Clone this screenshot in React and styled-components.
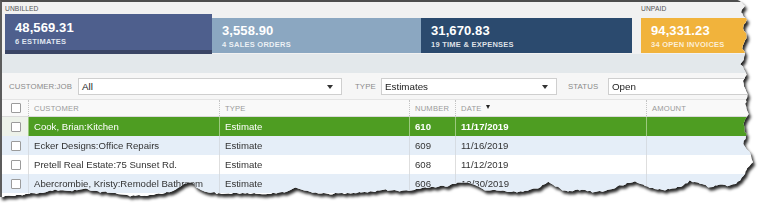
// ----- IMPORTS

import React from 'react';
import styled, { createGlobalStyle, css } from 'styled-components';

// ----- TORN EDGE

// right edge top to bottom, then bottom edge right to left
const EDGE_ANCHORS = [
	[738, 0], [745, 6], [741, 12], [747, 20], [743, 28], [747, 36], [742, 46], [745, 55],
	[741, 64], [746, 74], [743, 84], [748, 94], [745, 104], [748, 114], [743, 124], [746, 134],
	[744, 144], [750, 154], [753, 162], [746, 170], [744, 176],
	[738, 182], [730, 186], [720, 184], [710, 188], [700, 183], [690, 181], [680, 187],
	[665, 190], [650, 188], [635, 181], [625, 184], [610, 190], [595, 192], [580, 190],
	[565, 191], [548, 182], [538, 188], [520, 192], [500, 191], [485, 190], [472, 184],
	[460, 182], [448, 186], [430, 187], [414, 190], [400, 191], [385, 190], [370, 192],
	[350, 193], [330, 194], [310, 192], [296, 188], [285, 192], [265, 194], [245, 193],
	[225, 194], [205, 192], [196, 187], [190, 182], [183, 185], [170, 192], [150, 195],
	[130, 196], [115, 193], [100, 192], [85, 189], [70, 191], [55, 190], [40, 193],
	[20, 195], [0, 197],
];

const buildEdge = () => {
	let seed = 11;
	const rand = () => {
		seed = (seed * 16807) % 2147483647;
		return seed / 2147483647 - 0.5;
	};
	const pts = [[0, 0]];
	for (let i = 0; i < EDGE_ANCHORS.length - 1; i++) {
		const [ax, ay] = EDGE_ANCHORS[i];
		const [bx, by] = EDGE_ANCHORS[i + 1];
		const steps = Math.max(1, Math.ceil(Math.hypot(bx - ax, by - ay) / 3));
		for (let k = 0; k < steps; k++) {
			const t = k / steps;
			pts.push([ax + (bx - ax) * t + rand() * 1.6, ay + (by - ay) * t + rand() * 1.6]);
		}
	}
	pts.push(EDGE_ANCHORS[EDGE_ANCHORS.length - 1]);
	return `polygon(${pts.map(([x, y]) => `${x.toFixed(1)}px ${y.toFixed(1)}px`).join(', ')})`;
};

const EDGE = buildEdge();

// ----- STYLED COMPONENTS

const GlobalStyle = createGlobalStyle`
	html, body {
		margin: 0;
		padding: 0;
		background: #ffffff;
	}
	body {
		font-family: "Liberation Sans", Arial, sans-serif;
	}
`;

const Stage = styled.div`
	width: 768px;
	height: 217px;
	filter: drop-shadow(2px 3px 1.5px rgba(0, 0, 0, 0.85));
`;
const Sheet = styled.div`
	box-sizing: border-box;
	width: 768px;
	height: 217px;
	overflow: hidden;
	background: #f1f1f1;
	border-top: 2px solid #4d4d4d;
	border-left: 2px solid #5c5c5c;
	clip-path: ${EDGE};
`;

// summary bars

const Summary = styled.div`
	display: flex;
	align-items: flex-end;
	height: 52px;
	padding-left: 3px;
	background: #f1f1f1;
`;
const SummaryGroup = styled.div`
	display: flex;
	flex-direction: column;
	margin-left: ${({ $gap }) => $gap || 0}px;
`;
const Caption = styled.div`
	height: 12px;
	padding: 3px 0 0 0;
	box-sizing: border-box;
	font-size: 6.7px;
	line-height: 8px;
	color: #555555;
	letter-spacing: 0.1px;
`;
const TileRow = styled.div`
	display: flex;
	align-items: flex-end;
	height: 40px;
`;
const Tile = styled.div`
	box-sizing: border-box;
	width: ${({ $w }) => $w}px;
	height: ${({ $h }) => $h}px;
	margin-bottom: ${({ $strip }) => ($strip ? 0 : 1)}px;
	padding: ${({ $pad }) => $pad}px 0 0 10px;
	background: ${({ $bg }) => $bg};
	${({ $strip }) => $strip && css`
		border-bottom: 4px solid ${$strip};
	`}
	color: #ffffff;
	white-space: nowrap;
`;
const Amount = styled.div`
	font-size: 13px;
	line-height: 14px;
	font-weight: bold;
	letter-spacing: 0.1px;
`;
const Count = styled.div`
	margin-top: 2px;
	font-size: 7.5px;
	line-height: 9px;
	font-weight: bold;
	letter-spacing: 0.25px;
	color: ${({ $tone }) => $tone || 'rgba(255, 255, 255, 0.85)'};
`;

const Band = styled.div`
	height: 19px;
	background: #e3e8eb;
`;

// filter bar

const FilterBar = styled.div`
	display: flex;
	align-items: center;
	height: 27px;
	padding: 1px 0 0 7px;
	box-sizing: border-box;
	background: #f6f6f6;
	border-bottom: 1px solid #e4e4e4;
`;
const FilterLabel = styled.div`
	width: ${({ $w }) => $w}px;
	margin-left: ${({ $gap }) => $gap || 0}px;
	font-size: 7.8px;
	color: #8a8a8a;
	letter-spacing: 0.1px;
	white-space: nowrap;
`;
const SelectBox = styled.div`
	position: relative;
	box-sizing: border-box;
	display: flex;
	align-items: center;
	width: ${({ $w }) => $w}px;
	height: 17px;
	padding-left: 3px;
	background: #ffffff;
	border: 1px solid #cfcfcf;
	font-size: 9.8px;
	color: #222222;
`;
const Caret = styled.span`
	position: absolute;
	right: 8px;
	top: 6px;
	width: 0;
	height: 0;
	border-left: 3px solid transparent;
	border-right: 3px solid transparent;
	border-top: 4px solid #333333;
`;

// table

const COLUMNS = '26px 191px 190px 46px 191px 1fr';

const HeaderRow = styled.div`
	display: grid;
	grid-template-columns: ${COLUMNS};
	height: 16px;
	background: #f9f9f9;
	border-bottom: 1px solid #dadada;
`;
const HeaderCell = styled.div`
	display: flex;
	align-items: center;
	padding-left: 5px;
	font-size: 7.6px;
	color: #9a9a9a;
	letter-spacing: 0.2px;
	white-space: nowrap;
	${({ $first }) => !$first && css`
		border-left: 1px dotted #c4c4c4;
	`}
`;
const SortArrow = styled.span`
	display: inline-block;
	margin-left: 4px;
	width: 0;
	height: 0;
	border-left: 2.5px solid transparent;
	border-right: 2.5px solid transparent;
	border-top: 4px solid #222222;
	position: relative;
	top: -1px;
`;

const ROW_TONES = {
	selected: { bg: '#4e9d22', fg: '#ffffff', line: '#9cc97f', box: '#edf2ea' },
	alt: { bg: '#e5eef8', fg: '#333333', line: '#d6dce3', box: '#e5eef8' },
	plain: { bg: '#ffffff', fg: '#333333', line: '#dedede', box: '#ffffff' },
};

const Row = styled.div`
	display: grid;
	grid-template-columns: ${COLUMNS};
	height: 19px;
	background: ${({ $tone }) => ROW_TONES[$tone].bg};
`;
const Cell = styled.div`
	display: flex;
	align-items: center;
	padding-left: 5px;
	overflow: hidden;
	white-space: nowrap;
	font-size: 9.6px;
	font-weight: ${({ $strong }) => ($strong ? 'bold' : 'normal')};
	color: ${({ $tone }) => ROW_TONES[$tone].fg};
	border-left: 1px solid ${({ $tone }) => ROW_TONES[$tone].line};
`;
const BoxCell = styled.div`
	display: flex;
	align-items: center;
	justify-content: center;
	padding-left: 2px;
	background: ${({ $tone }) => ($tone ? ROW_TONES[$tone].box : 'transparent')};
`;
const CheckBox = styled.span`
	box-sizing: border-box;
	width: 10px;
	height: 10px;
	background: #ffffff;
	border: 1px solid #9b9b9b;
	border-radius: 1px;
`;

// ----- CONTENTS

const TILES = [
	{ amount: '48,569.31', count: '6 ESTIMATES', bg: '#4e5f8d', w: 207, h: 40, pad: 6.5, strip: '#3a4565', tone: '#dfe4ef' },
	{ amount: '3,558.90', count: '4 SALES ORDERS', bg: '#8ba7c1', w: 209, h: 35, pad: 5.5 },
	{ amount: '31,670.83', count: '19 TIME & EXPENSES', bg: '#2b4a6e', w: 211, h: 35, pad: 5.5 },
];

const ROWS = [
	{ tone: 'selected', customer: 'Cook, Brian:Kitchen', type: 'Estimate', number: '610', date: '11/17/2019' },
	{ tone: 'alt', customer: 'Ecker Designs:Office Repairs', type: 'Estimate', number: '609', date: '11/16/2019' },
	{ tone: 'plain', customer: 'Pretell Real Estate:75 Sunset Rd.', type: 'Estimate', number: '608', date: '11/12/2019' },
	{ tone: 'alt', customer: 'Abercrombie, Kristy:Remodel Bathroom', type: 'Estimate', number: '606', date: '10/30/2019' },
	{ tone: 'plain', customer: 'Baker, Chris:Family Room', type: 'Estimate', number: '604', date: '10/22/2019' },
];

const returnSummary = () => (
	<Summary>
		<SummaryGroup>
			<Caption>UNBILLED</Caption>
			<TileRow>
				{TILES.map(tile => (
					<Tile
						key={tile.amount}
						$bg={tile.bg}
						$w={tile.w}
						$h={tile.h}
						$pad={tile.pad}
						$strip={tile.strip}
					>
						<Amount>{tile.amount}</Amount>
						<Count $tone={tile.tone}>{tile.count}</Count>
					</Tile>
				))}
			</TileRow>
		</SummaryGroup>
		<SummaryGroup $gap={9}>
			<Caption>UNPAID</Caption>
			<TileRow>
				<Tile $bg="#f1b33c" $w={118} $h={35} $pad={5.5}>
					<Amount>94,331.23</Amount>
					<Count $tone="rgba(255, 255, 255, 0.8)">34 OPEN INVOICES</Count>
				</Tile>
			</TileRow>
		</SummaryGroup>
	</Summary>
);

const returnFilters = () => (
	<FilterBar>
		<FilterLabel $w={69}>CUSTOMER:JOB</FilterLabel>
		<SelectBox $w={264}>
			All
			<Caret />
		</SelectBox>
		<FilterLabel $w={26} $gap={13}>TYPE</FilterLabel>
		<SelectBox $w={176}>
			Estimates
			<Caret />
		</SelectBox>
		<FilterLabel $w={40} $gap={11}>STATUS</FilterLabel>
		<SelectBox $w={160}>Open</SelectBox>
	</FilterBar>
);

const returnTable = () => (
	<div>
		<HeaderRow>
			<BoxCell>
				<CheckBox />
			</BoxCell>
			<HeaderCell>CUSTOMER</HeaderCell>
			<HeaderCell>TYPE</HeaderCell>
			<HeaderCell>NUMBER</HeaderCell>
			<HeaderCell>
				DATE
				<SortArrow />
			</HeaderCell>
			<HeaderCell>AMOUNT</HeaderCell>
		</HeaderRow>
		{ROWS.map(row => (
			<Row key={row.number} $tone={row.tone}>
				<BoxCell $tone={row.tone}>
					<CheckBox />
				</BoxCell>
				<Cell $tone={row.tone}>{row.customer}</Cell>
				<Cell $tone={row.tone}>{row.type}</Cell>
				<Cell $tone={row.tone} $strong={row.tone === 'selected'}>{row.number}</Cell>
				<Cell $tone={row.tone} $strong={row.tone === 'selected'}>{row.date}</Cell>
				<Cell $tone={row.tone} />
			</Row>
		))}
	</div>
);

// 	SEND TO PAGE

export default function App() {
	return (
		<>
			<GlobalStyle />
			<Stage>
				<Sheet>
					{returnSummary()}
					<Band />
					{returnFilters()}
					{returnTable()}
				</Sheet>
			</Stage>
		</>
	);
}
